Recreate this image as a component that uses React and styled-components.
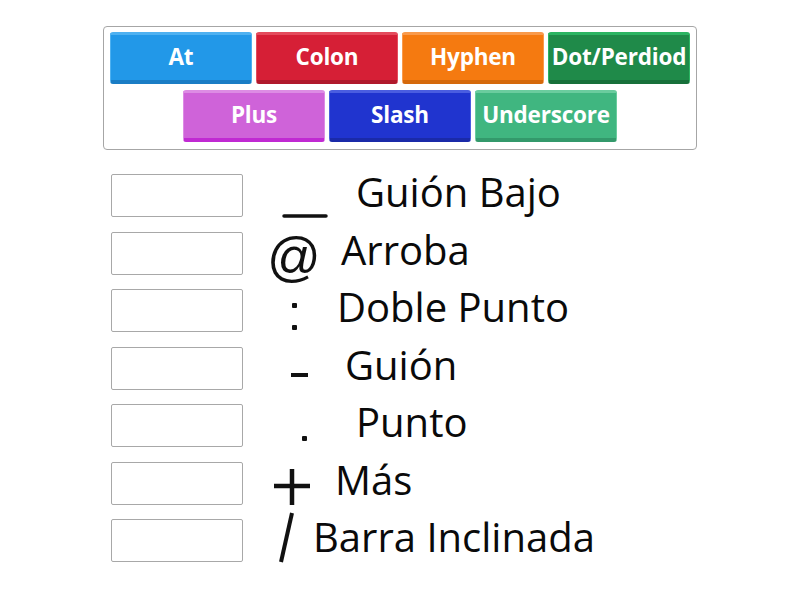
import React from "react";
import styled, { createGlobalStyle } from "styled-components";

const GlobalStyle = createGlobalStyle`
  body {
    margin: 0;
    background: #fff;
    font-family: "Open Sans", "Noto Sans", sans-serif;
  }
`;

const Page = styled.div`
  width: 800px;
  height: 600px;
  padding-top: 26px;
  box-sizing: border-box;
`;

const Bank = styled.div`
  margin-left: 103px;
  width: 594px;
  height: 124px;
  box-sizing: border-box;
  border: 1px solid #a6a6a6;
  border-radius: 4px;
  padding: 5px 6px 7px;
  display: flex;
  flex-wrap: wrap;
  justify-content: center;
  column-gap: 4px;
  row-gap: 6px;
`;

const Tile = styled.div`
  width: 142px;
  height: 52px;
  box-sizing: border-box;
  border-radius: 3px;
  background: ${(p) => p.$bg};
  border-top: 3px solid ${(p) => p.$light};
  border-left: 1px solid ${(p) => p.$light};
  border-right: 1px solid ${(p) => p.$light};
  border-bottom: 4px solid ${(p) => p.$dark};
  color: #fff;
  font-weight: 700;
  font-size: 22.5px;
  letter-spacing: -0.2px;
  display: flex;
  align-items: center;
  justify-content: center;
  white-space: nowrap;
  padding-bottom: 2px;
`;

const List = styled.div`
  margin-top: 24px;
  margin-left: 111px;
  display: flex;
  flex-direction: column;
`;

const Row = styled.div`
  height: 57.5px;
  display: flex;
  align-items: flex-start;
`;

const Box = styled.div`
  width: 132px;
  height: 43px;
  box-sizing: border-box;
  border: 1px solid #a8a8a8;
  border-radius: 2px;
  background: #fff;
  flex-shrink: 0;
`;

const Symbol = styled.svg`
  margin-left: 17px;
  flex-shrink: 0;
  overflow: visible;
`;

const Label = styled.div`
  font-size: 40px;
  line-height: 35px;
  color: #0a0a0a;
  white-space: nowrap;
`;

const tiles = [
  { text: "At", bg: "#2298e8", light: "#4eb1f1", dark: "#1a7dc5" },
  { text: "Colon", bg: "#d61f36", light: "#e44b5c", dark: "#b0192c" },
  { text: "Hyphen", bg: "#f57a10", light: "#f99a4b", dark: "#d5690b" },
  { text: "Dot/Perdiod", bg: "#1f8a49", light: "#2bb462", dark: "#17703a" },
  { text: "Plus", bg: "#cf63d9", light: "#dd8ce4", dark: "#c02ad2" },
  { text: "Slash", bg: "#2034cf", light: "#4a5de0", dark: "#1a2aa8" },
  { text: "Underscore", bg: "#40b680", light: "#6acc9e", dark: "#33996b" },
];

const ink = "#111";

const symbols = {
  under: (
    <line x1="24" y1="42" x2="66" y2="42" stroke={ink} strokeWidth="3.5" strokeLinecap="round" />
  ),
  at: (
    <text x="7" y="43" fontFamily="'Liberation Sans', sans-serif" fontSize="53" fill={ink}>
      @
    </text>
  ),
  colon: (
    <g fill={ink}>
      <rect x="32" y="14" width="5" height="5" rx="1" />
      <rect x="32" y="36" width="5" height="5" rx="1" />
    </g>
  ),
  hyphen: <line x1="31" y1="28" x2="48" y2="28" stroke={ink} strokeWidth="4" />,
  dot: <rect x="42" y="32" width="5" height="5" rx="1" fill={ink} />,
  plus: (
    <g stroke={ink} strokeWidth="4.5">
      <line x1="14" y1="24" x2="50" y2="24" />
      <line x1="32" y1="7" x2="32" y2="43" />
    </g>
  ),
  slash: <line x1="21" y1="43" x2="32" y2="-6" stroke={ink} strokeWidth="4" />,
};

const rows = [
  { label: "Guión Bajo", sym: "under", w: 96 },
  { label: "Arroba", sym: "at", w: 81 },
  { label: "Doble Punto", sym: "colon", w: 77 },
  { label: "Guión", sym: "hyphen", w: 85 },
  { label: "Punto", sym: "dot", w: 96 },
  { label: "Más", sym: "plus", w: 75 },
  { label: "Barra Inclinada", sym: "slash", w: 53 },
];

export default function App() {
  return (
    <Page>
      <GlobalStyle />
      <Bank>
        {tiles.map((t) => (
          <Tile key={t.text} $bg={t.bg} $light={t.light} $dark={t.dark}>
            {t.text}
          </Tile>
        ))}
      </Bank>
      <List>
        {rows.map((r) => (
          <Row key={r.label}>
            <Box />
            <Symbol width={r.w} height="50" viewBox={`0 0 ${r.w} 50`}>
              {symbols[r.sym]}
            </Symbol>
            <Label>{r.label}</Label>
          </Row>
        ))}
      </List>
    </Page>
  );
}
